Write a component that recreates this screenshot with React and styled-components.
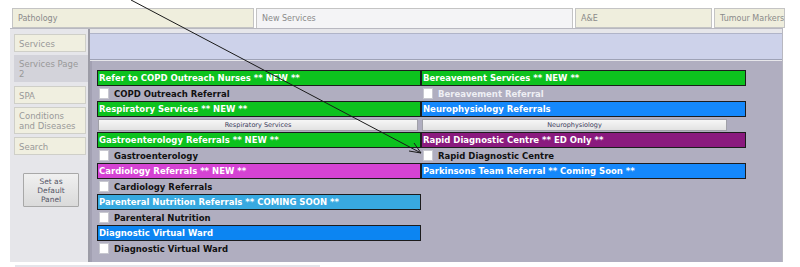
import React from 'react';
import styled, { createGlobalStyle } from 'styled-components';

const GlobalStyle = createGlobalStyle`
  html, body {
    margin: 0;
    padding: 0;
    background: #ffffff;
    font-family: "DejaVu Sans", Verdana, sans-serif;
  }
`;

const Page = styled.div`
  position: relative;
  width: 800px;
  height: 267px;
  overflow: hidden;
  padding-top: 8px;
  box-sizing: border-box;
`;

const TabBar = styled.div`
  display: flex;
  gap: 2px;
  padding-left: 12px;
  height: 20px;
`;

const Tab = styled.div`
  width: ${p => p.$w}px;
  box-sizing: border-box;
  background: ${p => (p.$active ? '#f4f4f6' : '#efeedd')};
  border: 1px solid #c4c4c4;
  border-bottom: ${p => (p.$active ? 'none' : '1px solid #c4c4c4')};
  color: #8a8a8a;
  font-size: 8px;
  padding: 5px 0 0 5px;
  white-space: nowrap;
  overflow: hidden;
`;

const Panel = styled.div`
  display: flex;
  margin-left: 10px;
  width: 773px;
  height: 234px;
  background: #e6e6ea;
  border-top: 1px solid #b8b8c0;
  border-right: 1px solid #b8b8c0;
  box-sizing: border-box;
`;

const Sidebar = styled.div`
  width: 78px;
  display: flex;
  flex-direction: column;
  padding: 5px 0 0 4px;
  box-sizing: border-box;
`;

const SideItem = styled.div`
  box-sizing: border-box;
  height: ${p => p.$h}px;
  margin-bottom: ${p => p.$mb}px;
  background: ${p => (p.$active ? '#d3d3da' : '#f0efe0')};
  border: 1px solid ${p => (p.$active ? '#d3d3da' : '#cfcfc8')};
  margin-right: ${p => (p.$active ? '-2px' : '2px')};
  color: #999999;
  font-size: 8.5px;
  line-height: 10px;
  padding: ${p => (p.$h > 20 ? '3px' : '4px')} 8px 0 4px;
`;

const DefaultButton = styled.button`
  margin: 18px 0 0 9px;
  width: 56px;
  height: 34px;
  padding: 0;
  background: linear-gradient(#f0f0f0, #dadada);
  border: 1px solid #a8a8a8;
  border-radius: 1px;
  color: #555566;
  font-family: "DejaVu Sans", Verdana, sans-serif;
  font-size: 7.5px;
  line-height: 9px;
`;

const Main = styled.div`
  flex: 1;
  display: flex;
  flex-direction: column;
  border-left: 2px solid #9c9ca6;
`;

const TopBand = styled.div`
  margin-top: 4px;
  height: 27px;
  background: #cdd2ea;
  border-top: 1px solid #b0b4c8;
  border-bottom: 1px solid #9ea2b6;
  box-sizing: border-box;
`;

const Content = styled.div`
  flex: 1;
  margin-top: 1px;
  background: #b0aec0;
  padding: 9px 0 0 5px;
  border-left: 2px solid #a2a0b2;
`;

const Grid = styled.div`
  display: grid;
  grid-template-columns: 324px 325px;
`;

const Header = styled.div`
  height: 16px;
  box-sizing: border-box;
  background: ${p => p.$bg};
  border: 1px solid #1c1c1c;
  color: #ffffff;
  font-weight: bold;
  font-size: 8.5px;
  line-height: 14px;
  padding-left: 1px;
  white-space: nowrap;
  overflow: hidden;
`;

const CheckRow = styled.div`
  height: 15px;
  display: flex;
  align-items: center;
  gap: 5px;
  padding-left: 2px;
  color: ${p => (p.$light ? '#eeeef4' : '#111111')};
  font-weight: bold;
  font-size: 8.5px;
  white-space: nowrap;
`;

const Box = styled.span`
  width: 10px;
  height: 11px;
  background: #ffffff;
  border: 1px solid #c8c8d0;
  box-sizing: border-box;
`;

const ButtonCell = styled.div`
  height: 15px;
  display: flex;
  align-items: center;
  padding-left: 1px;
`;

const WideButton = styled.button`
  width: ${p => p.$w}px;
  height: 12px;
  padding: 0;
  background: linear-gradient(#f6f6f6, #e2e2e2);
  border: 1px solid #a0a0a8;
  color: #3a3a5a;
  font-family: "DejaVu Sans", Verdana, sans-serif;
  font-size: 6.5px;
  line-height: 10px;
`;

const Empty = styled.div``;

const BottomStrip = styled.div`
  margin: 3px 0 0 15px;
  width: 305px;
  height: 2px;
  background: #e4e4ea;
`;

const Overlay = styled.svg`
  position: absolute;
  left: 0;
  top: 0;
  pointer-events: none;
`;

const GREEN = '#0dc21e';
const BLUE = '#1588fb';

const cells = [
  { t: 'h', bg: GREEN, text: 'Refer to COPD Outreach Nurses ** NEW **' },
  { t: 'h', bg: GREEN, text: 'Bereavement Services ** NEW **' },
  { t: 'c', text: 'COPD Outreach Referral' },
  { t: 'c', text: 'Bereavement Referral', light: true },
  { t: 'h', bg: GREEN, text: 'Respiratory Services ** NEW **' },
  { t: 'h', bg: BLUE, text: 'Neurophysiology Referrals' },
  { t: 'b', w: 320, text: 'Respiratory Services' },
  { t: 'b', w: 305, text: 'Neurophysiology' },
  { t: 'h', bg: GREEN, text: 'Gastroenterology Referrals ** NEW **' },
  { t: 'h', bg: '#8a1a7e', text: 'Rapid Diagnostic Centre ** ED Only **' },
  { t: 'c', text: 'Gastroenterology' },
  { t: 'c', text: 'Rapid Diagnostic Centre' },
  { t: 'h', bg: '#d543d3', text: 'Cardiology Referrals ** NEW **' },
  { t: 'h', bg: BLUE, text: 'Parkinsons Team Referral ** Coming Soon **' },
  { t: 'c', text: 'Cardiology Referrals' },
  { t: 'e' },
  { t: 'h', bg: '#38a9e0', text: 'Parenteral Nutrition Referrals ** COMING SOON **' },
  { t: 'e' },
  { t: 'c', text: 'Parenteral Nutrition' },
  { t: 'e' },
  { t: 'h', bg: '#0c85f2', text: 'Diagnostic Virtual Ward' },
  { t: 'e' },
  { t: 'c', text: 'Diagnostic Virtual Ward' },
  { t: 'e' },
];

const renderCell = (c, i) => {
  if (c.t === 'h') return <Header key={i} $bg={c.bg}>{c.text}</Header>;
  if (c.t === 'c')
    return (
      <CheckRow key={i} $light={c.light}>
        <Box />
        {c.text}
      </CheckRow>
    );
  if (c.t === 'b')
    return (
      <ButtonCell key={i}>
        <WideButton $w={c.w}>{c.text}</WideButton>
      </ButtonCell>
    );
  return <Empty key={i} />;
};

const sideItems = [
  { label: 'Services', h: 18, mb: 3 },
  { label: 'Services Page 2', h: 27, mb: 4, active: true },
  { label: 'SPA', h: 18, mb: 3 },
  { label: 'Conditions and Diseases', h: 27, mb: 3 },
  { label: 'Search', h: 18, mb: 0 },
];

const App = () => {
  return (
    <Page>
      <GlobalStyle />
      <TabBar>
        <Tab $w={242}>Pathology</Tab>
        <Tab $w={317} $active>New Services</Tab>
        <Tab $w={137}>A&amp;E</Tab>
        <Tab $w={71}>Tumour Markers</Tab>
      </TabBar>
      <Panel>
        <Sidebar>
          {sideItems.map(s => (
            <SideItem key={s.label} $h={s.h} $mb={s.mb} $active={s.active}>
              {s.label}
            </SideItem>
          ))}
          <DefaultButton>
            Set as
            <br />
            Default
            <br />
            Panel
          </DefaultButton>
        </Sidebar>
        <Main>
          <TopBand />
          <Content>
            <Grid>{cells.map(renderCell)}</Grid>
          </Content>
        </Main>
      </Panel>
      <BottomStrip />
      <Overlay width="800" height="267" viewBox="0 0 800 267">
        <line x1="131" y1="0" x2="421" y2="153" stroke="#1a1a1a" strokeWidth="1" />
        <path d="M421 153 L409 151 M421 153 L414 143" stroke="#1a1a1a" strokeWidth="1" fill="none" />
      </Overlay>
    </Page>
  );
};

export default App;
